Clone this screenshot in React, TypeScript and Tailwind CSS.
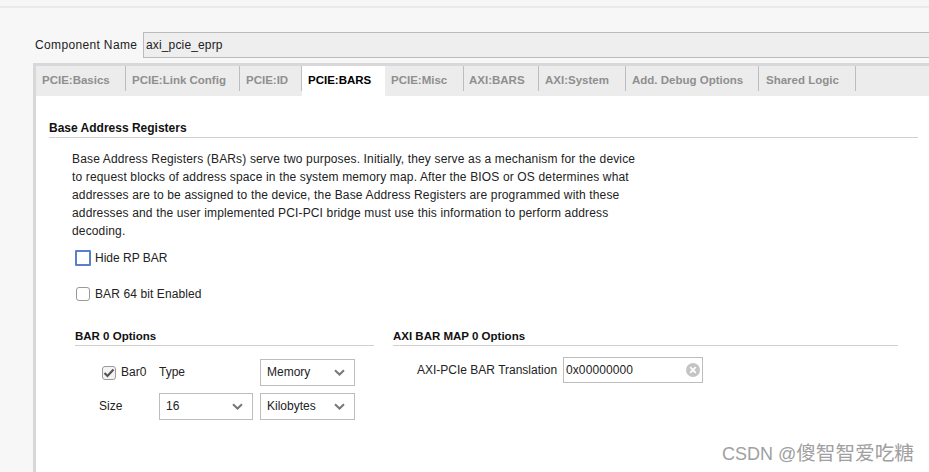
import React from "react";

function Tab({ label, w, pl = "pl-[6px]" }: { label: string; w: number; pl?: string }) {
  return (
    <div className={`h-[25px] border-r border-[#bdbdbd] ${pl} pt-[2px] flex items-center shrink-0 font-bold text-[11.5px] text-[#8f8f8f]`} style={{ width: w }}>
      {label}
    </div>
  );
}

function Chevron() {
  return (
    <svg width="11" height="7" viewBox="0 0 11 7" className="shrink-0">
      <path d="M1 1.2 L5.5 5.5 L10 1.2" fill="none" stroke="#777" strokeWidth="2" />
    </svg>
  );
}

function Select({ value, w }: { value: string; w: string }) {
  return (
    <div className={`${w} h-[27px] border border-[#bdbdbd] bg-white flex items-center justify-between pl-[6px] pr-[9px] text-[#222]`}>
      <span className="-mt-[1px]">{value}</span>
      <Chevron />
    </div>
  );
}

function SectionTitle({ children, className }: { children: React.ReactNode; className: string }) {
  return <div className={`font-bold text-[#111] border-b border-[#d0d0d0] leading-[14px] ${className}`}>{children}</div>;
}

export default function App() {
  return (
    <div className="relative w-[929px] h-[472px] overflow-hidden bg-[#f7f7f7] text-[12px] leading-[18px] text-[#222] font-['Liberation_Sans',Arial,sans-serif]">
      <div className="h-[8px] bg-[#f6f6f6] border-b-2 border-[#e9e9e9]" />
      <div className="flex items-center h-[26px] mt-[24px] pl-[35px]">
        <span className="w-[108px] shrink-0 text-[#222] tracking-[0.35px]">Component Name</span>
        <div className="flex-1 h-[26px] border border-[#bbbbbb] border-r-0 bg-[#eeeeee] pl-[2px] flex items-center tracking-[0.15px]">axi_pcie_eprp</div>
      </div>
      <div className="ml-[33px] mt-[5px] h-[409px] border-l-[3px] border-t-[3px] border-[#d8d8d8] flex flex-col">
        <div className="h-[30px] bg-[#ececec] flex items-start">
          <Tab label="PCIE:Basics" w={90} />
          <Tab label="PCIE:Link Config" w={114} />
          <Tab label="PCIE:ID" w={62} />
          <div className="w-[83px] h-[30px] bg-white pl-[6px] flex items-center pb-[3px] font-bold text-[11.5px] text-black shrink-0">PCIE:BARS</div>
          <Tab label="PCIE:Misc" w={79} />
          <Tab label="AXI:BARS" w={75} pl="pl-[5px]" />
          <Tab label="AXI:System" w={87} />
          <Tab label="Add. Debug Options" w={133} />
          <Tab label="Shared Logic" w={97} pl="pl-[7px]" />
        </div>
        <div className="flex-1 bg-white pt-[25px] pl-[13px] pr-[11px]">
          <SectionTitle className="h-[17px]">Base Address Registers</SectionTitle>
          <div className="ml-[23px] mt-[12px] w-[580px] text-[#222] leading-[18px] tracking-[0.15px]">
            Base Address Registers (BARs) serve two purposes. Initially, they serve as a mechanism for the device
            <br />
            to request blocks of address space in the system memory map. After the BIOS or OS determines what
            <br />
            addresses are to be assigned to the device, the Base Address Registers are programmed with these
            <br />
            addresses and the user implemented PCI-PCI bridge must use this information to perform address
            <br />
            decoding.
          </div>
          <div className="ml-[26px] mt-[10px] flex items-center h-[16px]">
            <div className="w-[16px] h-[16px] border-2 border-[#5b7fcf] rounded-[1px] bg-white" />
            <span className="ml-[4px]">Hide RP BAR</span>
          </div>
          <div className="ml-[27px] mt-[21px] flex items-center h-[14px]">
            <div className="w-[14px] h-[14px] border border-[#9a9a9a] rounded-[3px] bg-white" />
            <span className="ml-[5px] tracking-[0.1px]">BAR 64 bit Enabled</span>
          </div>
          <div className="ml-[26px] mt-[28px] flex">
            <div className="w-[299px] shrink-0">
              <SectionTitle className="h-[17px] text-[11.5px]">BAR 0 Options</SectionTitle>
              <div className="mt-[13px] grid grid-cols-[84px_101px_95px] gap-y-[7px] items-center">
                <div className="flex items-center pl-[27px] h-[27px]">
                  <div className="w-[14px] h-[14px] border border-[#9a9a9a] rounded-[3px] bg-[#f4f4f4] flex items-center justify-center shrink-0">
                    <svg width="12" height="10" viewBox="0 0 12 10">
                      <path d="M1.5 5 L4.5 8 L10.5 1.5" fill="none" stroke="#555" strokeWidth="2.2" />
                    </svg>
                  </div>
                  <span className="ml-[5px] -mt-[1px] text-[#222]">Bar0</span>
                </div>
                <div className="-mt-[1px]">Type</div>
                <Select value="Memory" w="w-[95px]" />
                <div className="pl-[24px] -mt-[1px]">Size</div>
                <Select value="16" w="w-[94px]" />
                <Select value="Kilobytes" w="w-[95px]" />
              </div>
            </div>
            <div className="ml-[19px] flex-1 mr-[20px]">
              <SectionTitle className="h-[17px] text-[11.5px]">AXI BAR MAP 0 Options</SectionTitle>
              <div className="mt-[11px] ml-[24px] flex items-center">
                <span className="w-[146px] shrink-0">AXI-PCIe BAR Translation</span>
                <div className="w-[140px] h-[26px] border border-[#bdbdbd] bg-white flex items-center justify-between pl-[2px] pr-[2px]">
                  <span className="tracking-[0.1px]">0x00000000</span>
                  <svg width="14" height="14" viewBox="0 0 14 14">
                    <circle cx="7" cy="7" r="7" fill="#c4c4c4" />
                    <path d="M4.2 4.2 L9.8 9.8 M9.8 4.2 L4.2 9.8" stroke="#fff" strokeWidth="1.8" />
                  </svg>
                </div>
              </div>
            </div>
          </div>
        </div>
      </div>
      <div className="absolute left-[722px] top-[442px] text-[18px] leading-[22px] text-[#a0a0a0] font-['Liberation_Sans','Noto_Sans_CJK_SC',sans-serif] whitespace-nowrap">
        CSDN @<span className="text-[19.6px]">傻智智爱吃糖</span>
      </div>
    </div>
  );
}
